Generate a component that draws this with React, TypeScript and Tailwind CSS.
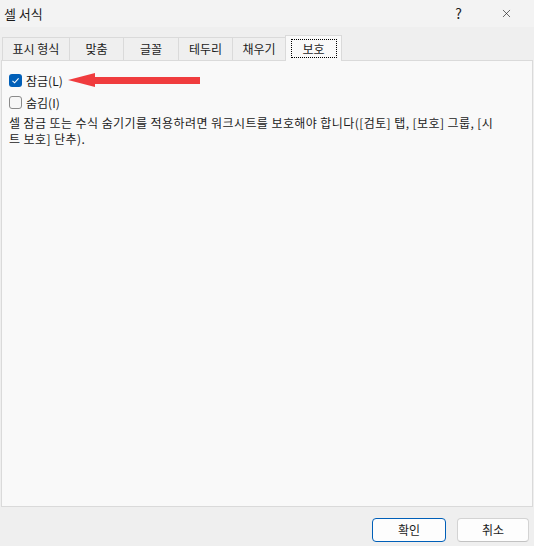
import { X } from "lucide-react";

const FONT = "font-['Noto_Sans_CJK_KR','Noto_Sans',sans-serif]";

const TABS = [
  { label: "표시 형식", w: "w-[67px]" },
  { label: "맞춤", w: "w-[54px]" },
  { label: "글꼴", w: "w-[55px]" },
  { label: "테두리", w: "w-[54px]" },
  { label: "채우기", w: "w-[53px]" },
];

function Checkbox({ checked }: { checked?: boolean }) {
  if (checked) {
    return (
      <span className="flex h-[13px] w-[13px] shrink-0 items-center justify-center rounded-[3px] bg-[#005fb8]">
        <svg width="9" height="9" viewBox="0 0 9 9" fill="none">
          <path d="M1.5 4.8 L3.6 6.8 L7.6 2.4" stroke="#fff" strokeWidth="1.1" />
        </svg>
      </span>
    );
  }
  return (
    <span className="h-[13px] w-[13px] shrink-0 rounded-[3px] border border-[#8a8a8a] bg-[#f6f6f6]" />
  );
}

export default function App() {
  return (
    <div
      className={`flex h-[546px] w-[534px] flex-col bg-[#efefef] text-[#1b1b1b] ${FONT}`}
    >
      {/* title bar */}
      <div className="flex h-[27px] shrink-0 items-center bg-[#f3f3f3]">
        <span className="pl-[4px] text-[13px]">셀 서식</span>
        <span className="ml-auto mr-[38px] text-[14px]">?</span>
        <X className="mr-[21px] h-[13px] w-[13px]" strokeWidth={1.2} />
      </div>

      {/* tabs */}
      <div className="mt-[8px] flex h-[25px] shrink-0 items-end pl-[2px] text-[12px]">
        {TABS.map((t) => (
          <div
            key={t.label}
            className={`flex h-[23px] items-center justify-center border-l border-t border-[#dadada] ${t.w}`}
          >
            {t.label}
          </div>
        ))}
        <div className="relative z-10 -mb-px flex h-[26px] w-[57px] items-center justify-center border-x border-t border-[#dadada] bg-[#f9f9f9]">
          <span className="flex h-[19px] w-[46px] items-center justify-center border border-dotted border-black">
            보호
          </span>
        </div>
      </div>

      {/* panel */}
      <div className="mx-[1px] flex h-[447px] shrink-0 flex-col border border-[#dadada] bg-[#f9f9f9] pl-[7px] pt-[13px] text-[12px]">
        <div className="relative flex h-[13px] items-center gap-[4px]">
          <Checkbox checked />
          <span>잠금(L)</span>
          <svg
            className="absolute left-[59px] top-[-1px]"
            width="133"
            height="15"
            viewBox="0 0 133 15"
          >
            <polygon points="0,7 27,0 27,4 132,4 132,11 27,11 27,14" fill="#f03c3e" />
          </svg>
        </div>
        <div className="mt-[9px] flex h-[13px] items-center gap-[4px]">
          <Checkbox />
          <span>숨김(I)</span>
        </div>
        <p className="mt-[6px] leading-[16px] tracking-[0.42px]">
          셀 잠금 또는 수식 숨기기를 적용하려면 워크시트를 보호해야 합니다([검토] 탭, [보호] 그룹, [시
          <br />
          트 보호] 단추).
        </p>
      </div>

      {/* buttons */}
      <div className="mt-[11px] flex justify-end gap-[11px] pr-[5px] text-[12px]">
        <button className="flex h-[24px] w-[74px] items-center justify-center rounded-[4px] border border-[#005fb8] bg-[#fdfdfd]">
          확인
        </button>
        <button className="flex h-[24px] w-[72px] items-center justify-center rounded-[4px] border border-[#d3d3d3] border-b-[#c2c2c2] bg-[#fdfdfd]">
          취소
        </button>
      </div>
    </div>
  );
}
